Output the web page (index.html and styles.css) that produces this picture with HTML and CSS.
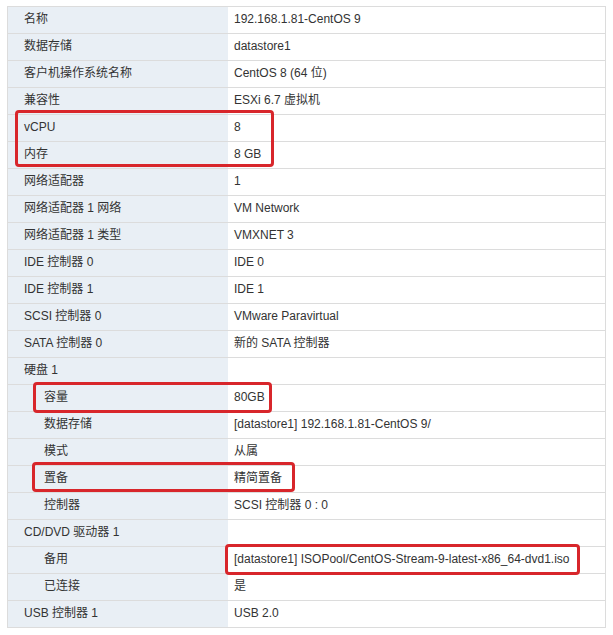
FILE: index.html
```html
<!DOCTYPE html>
<html lang="zh-CN">
<head>
<meta charset="utf-8">
<title>虚拟机配置</title>
<link rel="stylesheet" href="styles.css">
</head>
<body>
<div class="sheet">
  <div class="table">
    <div class="row"><div class="k">名称</div><div class="v">192.168.1.81-CentOS 9</div></div>
    <div class="row"><div class="k">数据存储</div><div class="v">datastore1</div></div>
    <div class="row"><div class="k">客户机操作系统名称</div><div class="v">CentOS 8 (64 位)</div></div>
    <div class="row"><div class="k">兼容性</div><div class="v">ESXi 6.7 虚拟机</div></div>
    <div class="row"><div class="k">vCPU</div><div class="v">8</div></div>
    <div class="row"><div class="k">内存</div><div class="v">8 GB</div></div>
    <div class="row"><div class="k">网络适配器</div><div class="v">1</div></div>
    <div class="row"><div class="k">网络适配器 1 网络</div><div class="v">VM Network</div></div>
    <div class="row"><div class="k">网络适配器 1 类型</div><div class="v">VMXNET 3</div></div>
    <div class="row"><div class="k">IDE 控制器 0</div><div class="v">IDE 0</div></div>
    <div class="row"><div class="k">IDE 控制器 1</div><div class="v">IDE 1</div></div>
    <div class="row"><div class="k">SCSI 控制器 0</div><div class="v">VMware Paravirtual</div></div>
    <div class="row"><div class="k">SATA 控制器 0</div><div class="v">新的 SATA 控制器</div></div>
    <div class="row"><div class="k">硬盘 1</div><div class="v"></div></div>
    <div class="row"><div class="k sub">容量</div><div class="v">80GB</div></div>
    <div class="row"><div class="k sub">数据存储</div><div class="v">[datastore1] 192.168.1.81-CentOS 9/</div></div>
    <div class="row"><div class="k sub">模式</div><div class="v">从属</div></div>
    <div class="row"><div class="k sub">置备</div><div class="v">精简置备</div></div>
    <div class="row"><div class="k sub">控制器</div><div class="v">SCSI 控制器 0 : 0</div></div>
    <div class="row"><div class="k">CD/DVD 驱动器 1</div><div class="v"></div></div>
    <div class="row"><div class="k sub">备用</div><div class="v">[datastore1] ISOPool/CentOS-Stream-9-latest-x86_64-dvd1.iso</div></div>
    <div class="row"><div class="k sub">已连接</div><div class="v">是</div></div>
    <div class="row"><div class="k">USB 控制器 1</div><div class="v">USB 2.0</div></div>
  </div>
  <div class="mark mark-cpu"></div>
  <div class="mark mark-cap"></div>
  <div class="mark mark-prov"></div>
  <div class="mark mark-iso"></div>
</div>
</body>
</html>
```
FILE: styles.css
```css
html, body {
  margin: 0;
  padding: 0;
  background: #ffffff;
}
.sheet {
  position: relative;
  width: 613px;
  height: 635px;
  padding: 6px 0 0 7px;
  box-sizing: border-box;
  font-family: "Liberation Sans", "Noto Sans CJK SC", sans-serif;
  font-size: 12px;
  line-height: 14px;
  color: #333333;
}
.table {
  width: 599px;
  border-top: 1px solid #dcdcdc;
  border-left: 1px solid #dcdcdc;
  border-right: 1px solid #dcdcdc;
  box-sizing: border-box;
}
.row {
  display: grid;
  grid-template-columns: 220px 1fr;
  height: 27px;
  border-bottom: 1px solid #dcdcdc;
  box-sizing: border-box;
}
.k, .v {
  display: flex;
  align-items: center;
  white-space: nowrap;
  padding-bottom: 2px;
}
.k {
  background: #e9eff5;
  padding-left: 16px;
}
.k.sub {
  padding-left: 36px;
}
.v {
  background: #ffffff;
  padding-left: 6px;
}
.mark {
  position: absolute;
  border: 3px solid #d8262b;
  border-radius: 4px;
  box-sizing: border-box;
}
.mark-cpu { left: 15px; top: 110px; width: 259px; height: 57px; }
.mark-cap { left: 33px; top: 382px; width: 239px; height: 31px; }
.mark-prov { left: 32px; top: 462px; width: 263px; height: 30px; }
.mark-iso { left: 225px; top: 544px; width: 355px; height: 31px; }
```
